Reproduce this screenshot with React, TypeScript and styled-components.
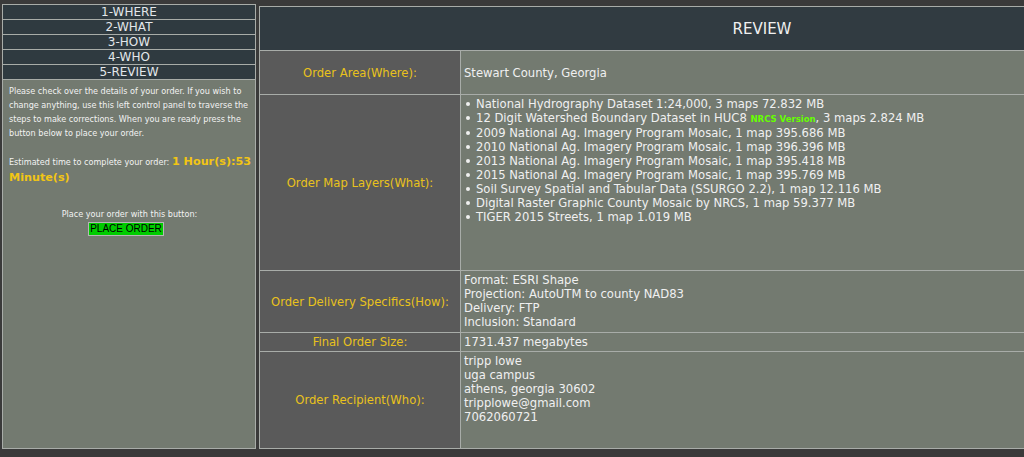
import { createGlobalStyle, styled } from "styled-components";

const GlobalStyle = createGlobalStyle`
    html, body {
        margin: 0;
        padding: 0;
        background-color: #3a3a3a;
        overflow: hidden;
    }
    body {
        font-family: "DejaVu Sans", Verdana, sans-serif;
    }
`

const Page = styled.div`
    width: 1024px;
    height: 457px;
    overflow: hidden;
    display: flex;
    align-items: flex-start;
    padding: 4px 0 0 2px;
    box-sizing: border-box;
    gap: 3px;
`

const SidePanel = styled.div`
    flex-shrink: 0;
    width: 254px;
    display: flex;
    flex-direction: column;
`

const StepButton = styled.div`
    height: 14px;
    line-height: 14px;
    background-color: #2f3a40;
    border: 1px solid #a8aca8;
    border-bottom: none;
    color: #e3e7ea;
    font-size: 12px;
    text-align: center;
    &:last-of-type {
        height: 15px;
    }
`

const SideBody = styled.div`
    height: 370px;
    box-sizing: border-box;
    background-color: #737a70;
    border: 1px solid #a8aca8;
    padding: 4px 1px 0 6px;
    color: #f2f2f2;
    font-size: 8.1px;
    line-height: 14px;
`

const Notice = styled.p`
    margin: 0 0 14px 0;
`

const Estimate = styled.p`
    margin: 0 0 21px 0;
    line-height: 15px;
`

const EstimateValue = styled.span`
    color: #f2c514;
    font-weight: bold;
    font-size: 11.2px;
    line-height: 15px;
`

const PlaceBlock = styled.div`
    display: flex;
    flex-direction: column;
    align-items: center;
    gap: 1px;
    padding-right: 4px;
`

const PlaceButton = styled.button`
    background-color: #00cc00;
    border: 1px solid #b5b5b5;
    color: #000;
    font-family: "Liberation Sans", Arial, sans-serif;
    font-size: 10px;
    white-space: nowrap;
    padding: 0;
    width: 76px;
    height: 14px;
    line-height: 12px;
    margin-left: -7px;
`

const ReviewTable = styled.table`
    flex-shrink: 0;
    margin-top: 2px;
    width: 1006px;
    border-collapse: collapse;
    border: 1px solid #a8aca8;
    font-size: 11.6px;
`

const HeaderCell = styled.th`
    height: 43px;
    background-color: #313b41;
    color: #f0f0f0;
    font-weight: normal;
    font-size: 15px;
    text-align: center;
    padding: 0;
    border-bottom: 1px solid #a8aca8;
`

const LabelCell = styled.td<{ $h: number }>`
    width: 201px;
    height: ${p => p.$h}px;
    box-sizing: border-box;
    background-color: #5a5a5a;
    color: #e9c21c;
    text-align: center;
    vertical-align: middle;
    padding: 0;
    border: 1px solid #a8aca8;
`

const ValueCell = styled.td<{ $middle?: boolean }>`
    background-color: #737a70;
    color: #f0f0f0;
    vertical-align: ${p => (p.$middle ? "middle" : "top")};
    padding: 2px 3px;
    line-height: 14px;
    border: 1px solid #a8aca8;
`

const LayerList = styled.ul`
    list-style: none;
    margin: 0;
    padding: 0;
`

const LayerItem = styled.li`
    position: relative;
    padding-left: 12px;
    &::before {
        content: "";
        position: absolute;
        left: 2px;
        top: 5px;
        width: 4px;
        height: 4px;
        border-radius: 50%;
        background-color: #f0f0f0;
    }
`

const NrcsTag = styled.span`
    color: #66ff00;
    font-weight: bold;
    font-size: 8.5px;
`

const layers = [
    "National Hydrography Dataset 1:24,000, 3 maps 72.832 MB",
    "12 Digit Watershed Boundary Dataset in HUC8",
    "2009 National Ag. Imagery Program Mosaic, 1 map 395.686 MB",
    "2010 National Ag. Imagery Program Mosaic, 1 map 396.396 MB",
    "2013 National Ag. Imagery Program Mosaic, 1 map 395.418 MB",
    "2015 National Ag. Imagery Program Mosaic, 1 map 395.769 MB",
    "Soil Survey Spatial and Tabular Data (SSURGO 2.2), 1 map 12.116 MB",
    "Digital Raster Graphic County Mosaic by NRCS, 1 map 59.377 MB",
    "TIGER 2015 Streets, 1 map 1.019 MB",
];

const steps = ["1-WHERE", "2-WHAT", "3-HOW", "4-WHO", "5-REVIEW"];

export default function App() {
    return (
        <Page>
            <GlobalStyle />
            <SidePanel>
                {steps.map((s) => (
                    <StepButton key={s}>{s}</StepButton>
                ))}
                <SideBody>
                    <Notice>
                        Please check over the details of your order. If you wish to change anything, use this left control panel to traverse the steps to make corrections. When you are ready press the button below to place your order.
                    </Notice>
                    <Estimate>
                        Estimated time to complete your order: <EstimateValue>1 Hour(s):53</EstimateValue>
                        <br />
                        <EstimateValue>Minute(s)</EstimateValue>
                    </Estimate>
                    <PlaceBlock>
                        <span>Place your order with this button:</span>
                        <PlaceButton>PLACE ORDER</PlaceButton>
                    </PlaceBlock>
                </SideBody>
            </SidePanel>

            <ReviewTable>
                <tbody>
                    <tr>
                        <HeaderCell colSpan={2}>REVIEW</HeaderCell>
                    </tr>
                    <tr>
                        <LabelCell $h={44}>Order Area(Where):</LabelCell>
                        <ValueCell $middle>Stewart County, Georgia</ValueCell>
                    </tr>
                    <tr>
                        <LabelCell $h={176}>Order Map Layers(What):</LabelCell>
                        <ValueCell>
                            <LayerList>
                                {layers.map((l, i) => (
                                    <LayerItem key={l}>
                                        {l}
                                        {i === 1 && (
                                            <>
                                                {" "}<NrcsTag>NRCS Version</NrcsTag>, 3 maps 2.824 MB
                                            </>
                                        )}
                                    </LayerItem>
                                ))}
                            </LayerList>
                        </ValueCell>
                    </tr>
                    <tr>
                        <LabelCell $h={62}>Order Delivery Specifics(How):</LabelCell>
                        <ValueCell>
                            Format: ESRI Shape<br />
                            Projection: AutoUTM to county NAD83<br />
                            Delivery: FTP<br />
                            Inclusion: Standard
                        </ValueCell>
                    </tr>
                    <tr>
                        <LabelCell $h={18}>Final Order Size:</LabelCell>
                        <ValueCell $middle>1731.437 megabytes</ValueCell>
                    </tr>
                    <tr>
                        <LabelCell $h={97}>Order Recipient(Who):</LabelCell>
                        <ValueCell>
                            tripp lowe<br />
                            uga campus<br />
                            athens, georgia 30602<br />
                            tripplowe@gmail.com<br />
                            7062060721
                        </ValueCell>
                    </tr>
                </tbody>
            </ReviewTable>
        </Page>
    );
}
